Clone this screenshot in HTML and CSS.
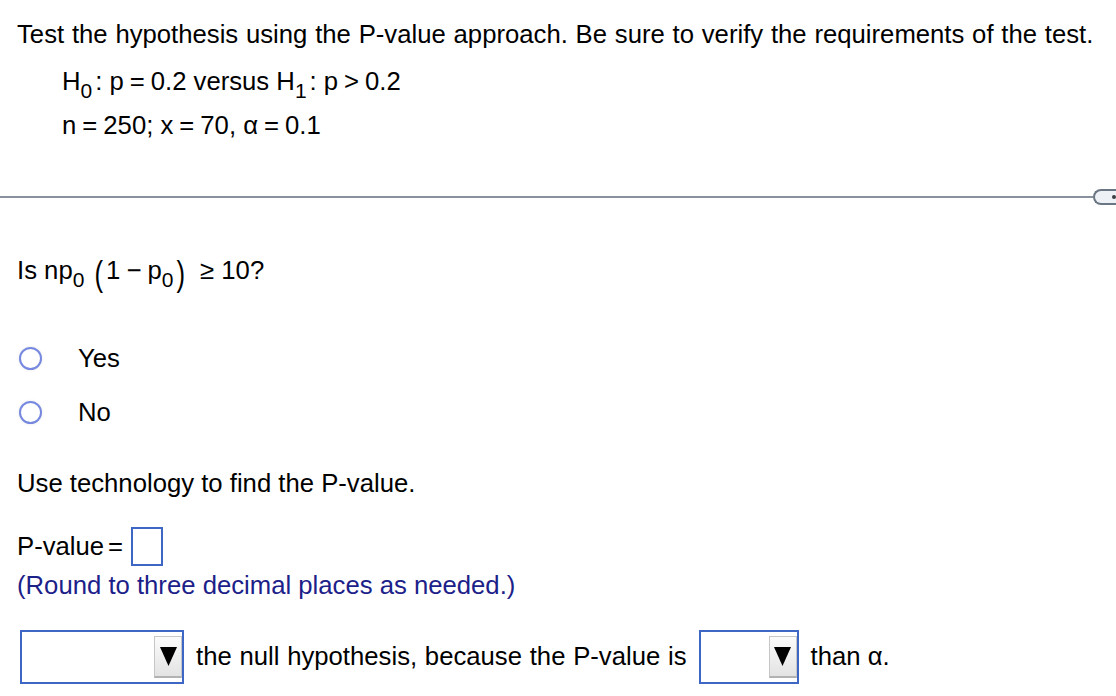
FILE: index.html
```html
<!DOCTYPE html>
<html lang="en">
<head>
<meta charset="utf-8">
<title>Hypothesis test</title>
<link rel="stylesheet" href="styles.css">
</head>
<body>
<div class="page">
  <p class="intro">Test the hypothesis using the P-value approach. Be sure to verify the requirements of the test.</p>
  <div class="givens">
    <div class="math-line">H<sub>0</sub><span class="colon">:</span>p<span class="rel">=</span>0.2 versus H<sub>1</sub><span class="colon">:</span>p<span class="rel">&gt;</span>0.2</div>
    <div class="math-line">n<span class="rel">=</span>250; x<span class="rel">=</span>70, α<span class="rel">=</span>0.1</div>
  </div>
</div>
<div class="splitter">
  <div class="splitter-line"></div>
  <div class="splitter-handle"><span class="dot"></span></div>
</div>
<div class="page">
  <p class="question">Is np<sub>0</sub> <span class="paren">(</span>1<span class="rel">−</span>p<sub>0</sub><span class="paren">)</span> <span class="geq">≥ 10?</span></p>
  <div class="options">
    <div class="option"><span class="radio"></span><span>Yes</span></div>
    <div class="option"><span class="radio"></span><span>No</span></div>
  </div>
  <p class="tech">Use technology to find the P-value.</p>
  <div class="answer-row"><span>P-value</span><span class="eq">=</span><span class="answer-box"></span></div>
  <p class="hint">(Round to three decimal places as needed.)</p>
  <div class="conclusion">
    <div class="select wide"><span class="select-btn"><svg width="17" height="19" viewBox="0 0 17 19"><polygon points="0,0 17,0 8.5,19" fill="#000"/></svg></span></div>
    <span class="spaced">the null hypothesis, because the P-value is</span>
    <div class="select narrow"><span class="select-btn"><svg width="17" height="19" viewBox="0 0 17 19"><polygon points="0,0 17,0 8.5,19" fill="#000"/></svg></span></div>
    <span>than α.</span>
  </div>
</div>
</body>
</html>
```
FILE: styles.css
```css
html, body {
  margin: 0;
  padding: 0;
  background: #fff;
}
body {
  font-family: "Liberation Sans", Arial, sans-serif;
  font-size: 25.7px;
  color: #000;
}
.page {
  padding-left: 17px;
}
.intro {
  margin: 0;
  padding-top: 19px;
  line-height: 30px;
  word-spacing: 0.65px;
  white-space: nowrap;
}
.givens {
  margin-top: 10px;
  padding-left: 45px;
}
.math-line {
  line-height: 44px;
  white-space: nowrap;
}
sub {
  font-size: 21px;
  vertical-align: -8px;
  line-height: 0;
}
.colon {
  margin: 0 7px 0 3px;
}
.rel {
  margin: 0 6px;
}
.splitter {
  display: flex;
  align-items: center;
  margin-top: 42px;
  height: 16px;
}
.splitter-line {
  flex: 1;
  height: 2px;
  background: #88919c;
}
.splitter-handle {
  box-sizing: border-box;
  width: 23px;
  height: 16px;
  border: 2px solid #6b7684;
  border-right: none;
  border-radius: 8px 0 0 8px;
  background: #eef1f5;
  display: flex;
  align-items: center;
  justify-content: flex-end;
}
.dot {
  width: 4px;
  height: 4px;
  border-radius: 50%;
  background: #3a3f46;
}
.question {
  margin: 50px 0 0;
  line-height: 30px;
  white-space: nowrap;
}
.paren {
  display: inline-block;
  margin: 0 3px;
  transform: scale(1, 1.35) translateY(3px);
}
.geq {
  margin-left: 5px;
}
.options {
  margin-top: 58px;
  display: flex;
  flex-direction: column;
  gap: 24px;
}
.option {
  display: flex;
  align-items: center;
  height: 30px;
}
.radio {
  box-sizing: border-box;
  width: 23px;
  height: 23px;
  border: 2px solid #7688df;
  border-radius: 50%;
  background: #fff;
  margin-left: 2px;
  margin-right: 36px;
  box-shadow: 0 0 3px rgba(0, 0, 0, 0.1);
}
.tech {
  margin: 41px 0 0;
  line-height: 30px;
}
.answer-row {
  margin-top: 29px;
  display: flex;
  align-items: center;
  height: 39px;
}
.eq {
  margin-left: 4px;
}
.answer-box {
  box-sizing: border-box;
  width: 32px;
  height: 39px;
  border: 2px solid #3d66c5;
  margin-left: 8px;
}
.hint {
  margin: 4px 0 0;
  line-height: 30px;
  color: #1c2189;
}
.conclusion {
  margin-top: 30px;
  display: flex;
  align-items: center;
  gap: 12px;
  height: 54px;
  white-space: nowrap;
}
.conclusion > span {
  position: relative;
  top: -1px;
}
.spaced {
  word-spacing: 0.6px;
}
.select {
  box-sizing: border-box;
  height: 54px;
  border: 2px solid #3d66c5;
  background: #fff;
  display: flex;
  align-items: center;
  justify-content: flex-end;
}
.select.wide {
  width: 164px;
  margin-left: 3px;
}
.select.narrow {
  width: 100px;
}
.select-btn {
  box-sizing: border-box;
  width: 28px;
  height: 42px;
  border: 1px solid #c6c6c6;
  border-bottom: 2px solid #b2b2b2;
  background: linear-gradient(#fbfbfb, #e3e3e3);
  display: flex;
  align-items: center;
  justify-content: center;
}
```
